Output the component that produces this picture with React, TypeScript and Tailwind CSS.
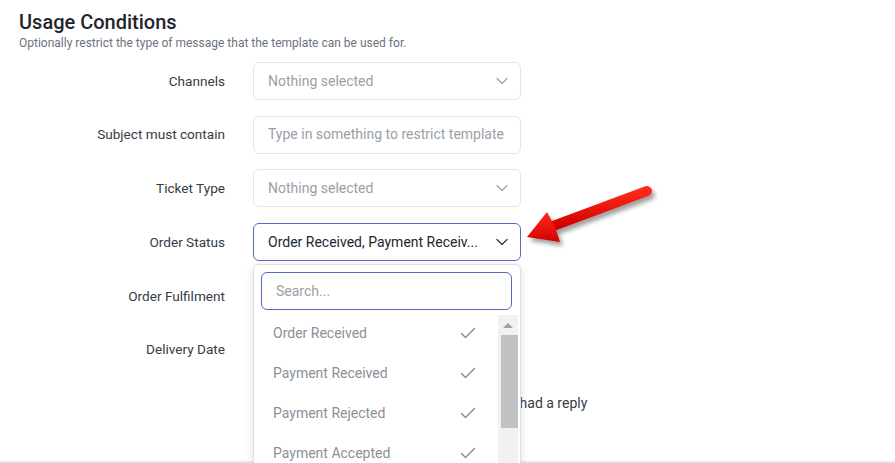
import React from "react";

const font = { fontFamily: "Roboto, 'Noto Sans', sans-serif" };

const Chevron = ({ className = "" }: { className?: string }) => (
  <svg width="12" height="8" viewBox="0 0 12 8" fill="none" className={className}>
    <path d="M1 1.5l5 5 5-5" stroke="currentColor" strokeWidth="1.4" strokeLinecap="round" strokeLinejoin="round" />
  </svg>
);

const Check = () => (
  <svg width="16" height="12" viewBox="0 0 16 12" fill="none" className="text-[#8a8f98]">
    <path d="M1.5 6.5l4 4 9-9" stroke="currentColor" strokeWidth="1.5" strokeLinecap="round" strokeLinejoin="round" />
  </svg>
);

// red annotation arrow pointing at the Order Status select
const Arrow = () => (
  <svg
    width="150"
    height="80"
    viewBox="0 0 150 80"
    className="absolute left-[515px] top-[181px] pointer-events-none"
  >
    <defs>
      <filter id="sh" x="-20%" y="-20%" width="140%" height="160%">
        <feGaussianBlur stdDeviation="2" />
      </filter>
      <linearGradient id="rg" x1="0" y1="0" x2="0" y2="1">
        <stop offset="0" stopColor="#ff2a1a" />
        <stop offset="1" stopColor="#d40000" />
      </linearGradient>
    </defs>
    <g transform="translate(3,4)" filter="url(#sh)" opacity="0.55">
      <line x1="38" y1="45" x2="132" y2="10" stroke="#555" strokeWidth="10" strokeLinecap="round" />
      <polygon points="12,56 32,31 40,46 45,61" fill="#555" />
    </g>
    <line x1="38" y1="45" x2="132" y2="10" stroke="url(#rg)" strokeWidth="10" strokeLinecap="round" />
    <polygon points="12,56 32,31 40,46 45,61" fill="url(#rg)" />
  </svg>
);

const Field = ({ children, active = false }: { children?: React.ReactNode; active?: boolean }) => (
  <div
    className={`w-[268px] h-[38px] rounded-md border bg-white flex items-center pl-[14px] pr-[12px] text-[14px] ${
      active ? "border-[#5568c4]" : "border-[#e3e5e8]"
    }`}
  >
    {children}
  </div>
);

const Label = ({ children }: { children?: React.ReactNode }) => (
  <div className="w-[225px] text-right text-[13.6px] text-[#363b44]">{children}</div>
);

const options = ["Order Received", "Payment Received", "Payment Rejected", "Payment Accepted", "Order Shipped"];

export default function App() {
  return (
    <div style={font} className="relative w-[895px] h-[463px] overflow-hidden bg-white">
      <div className="pl-[19px] pt-[8px]">
        <h2 className="text-[20px] leading-[28px] font-medium text-[#1f2530]">Usage Conditions</h2>
        <p className="text-[12px] leading-[14px] text-[#6b7280]">
          Optionally restrict the type of message that the template can be used for.
        </p>
      </div>

      <div className="mt-[12px] flex flex-col gap-[15.7px]">
        <div className="flex items-center">
          <Label>Channels</Label>
          <div className="ml-[28px]">
            <Field>
              <span className="flex-1 text-[#9aa0a8]">Nothing selected</span>
              <Chevron className="text-[#a3a8b0]" />
            </Field>
          </div>
        </div>

        <div className="flex items-center">
          <Label>Subject must contain</Label>
          <div className="ml-[28px]">
            <Field>
              <span className="flex-1 text-[#9aa0a8] whitespace-nowrap">Type in something to restrict template</span>
            </Field>
          </div>
        </div>

        <div className="flex items-center">
          <Label>Ticket Type</Label>
          <div className="ml-[28px]">
            <Field>
              <span className="flex-1 text-[#9aa0a8]">Nothing selected</span>
              <Chevron className="text-[#a3a8b0]" />
            </Field>
          </div>
        </div>

        <div className="flex items-center">
          <Label>Order Status</Label>
          <div className="ml-[28px] relative z-10">
            <Field active>
              <span className="flex-1 text-[#22262e]">Order Received, Payment Receiv...</span>
              <Chevron className="text-[#3a3f48]" />
            </Field>

            <div className="absolute left-0 top-[41px] w-[268px] h-[260px] bg-white border border-[#dcdfe3] rounded-t-md shadow-[0_2px_8px_rgba(0,0,0,0.12)]">
              <div className="pl-[7px] pr-[8px] pt-[7px]">
                <div className="h-[38px] rounded-md border border-[#5568c4] flex items-center pl-[14px] text-[14px] text-[#9aa0a8]">
                  Search...
                </div>
              </div>
              <div className="flex mt-[3px]">
                <div className="flex-1 flex flex-col">
                  {options.map((o) => (
                    <div key={o} className="h-[40px] flex items-center pl-[19px] pr-[22px] text-[14px] text-[#8a8f98]">
                      <span className="flex-1">{o}</span>
                      <Check />
                    </div>
                  ))}
                </div>
                <div className="w-[20px] mr-[2px] mt-[2px] bg-[#f1f1f1] flex flex-col items-center">
                  <div className="h-[20px] flex items-center justify-center">
                    <div className="w-0 h-0 border-l-[5px] border-r-[5px] border-b-[5px] border-l-transparent border-r-transparent border-b-[#a3a3a3]" />
                  </div>
                  <div className="w-[17px] ml-[2px] h-[93px] bg-[#c1c1c1]" />
                </div>
              </div>
            </div>
          </div>
        </div>

        <div className="flex items-center">
          <Label>Order Fulfilment</Label>
          <div className="ml-[28px]">
            <Field />
          </div>
        </div>

        <div className="flex items-center">
          <Label>Delivery Date</Label>
          <div className="ml-[28px]">
            <Field />
          </div>
        </div>

        <div className="flex items-center h-[38px]">
          <Label />
          <div className="ml-[28px] flex items-center gap-[12px] text-[14px] text-[#363b44] whitespace-nowrap">
            <span className="w-[16px] h-[16px] rounded border border-[#c9ccd1]" />
            <span>Only apply this if the ticket has not yet had a reply</span>
          </div>
        </div>
      </div>

      <div className="absolute left-0 right-0 bottom-0 h-[2px] bg-[#e6e7eb]" />
      <Arrow />
    </div>
  );
}
